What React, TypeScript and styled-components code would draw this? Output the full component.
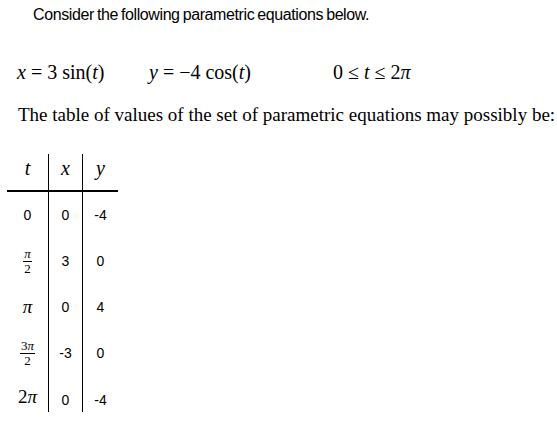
import React from "react";
import styled, { createGlobalStyle } from "styled-components";

const GlobalStyle = createGlobalStyle`
  html, body {
    margin: 0;
    padding: 0;
    background: #ffffff;
    color: #000000;
  }
`;

const Page = styled.div`
  width: 557px;
  height: 428px;
  overflow: hidden;
  display: flex;
  flex-direction: column;
`;

const Prompt = styled.div`
  margin: 6px 0 0 33px;
  font-family: "Liberation Sans", Arial, sans-serif;
  font-size: 16px;
  letter-spacing: -0.4px;
  word-spacing: -1px;
  line-height: 18px;
`;

const EquationRow = styled.div`
  display: flex;
  margin: 36px 0 0 17px;
  font-family: "Liberation Serif", "Times New Roman", serif;
  font-size: 20px;
  line-height: 24px;
  white-space: pre;
`;

const Eq = styled.span<{ $width: number }>`
  width: ${(p) => p.$width}px;
`;

const V = styled.i`
  font-style: italic;
`;

const Op = styled.span`
  padding: 0 5px;
`;

const Sentence = styled.div`
  margin: 20px 0 0 18px;
  font-family: "Liberation Serif", "Times New Roman", serif;
  font-size: 19px;
  line-height: 22px;
  white-space: nowrap;
`;

const Table = styled.div`
  margin: 28px 0 0 7px;
  display: grid;
  grid-template-columns: 42px 34px 35px;
  grid-template-rows: 38px 46px 46px 46px 46px 36px;
  width: 111px;
`;

const Cell = styled.div<{ $line?: boolean; $head?: boolean; $last?: boolean }>`
  display: flex;
  justify-content: center;
  align-items: ${(p) => (p.$last ? "flex-end" : "center")};
  padding-bottom: ${(p) => (p.$last ? "4px" : "0")};
  border-right: ${(p) => (p.$line ? "1px solid #000" : "none")};
  border-bottom: ${(p) => (p.$head ? "2px solid #000" : "none")};
  font-family: "Liberation Sans", Arial, sans-serif;
  font-size: 14px;
`;

const HeadVar = styled.i`
  font-family: "Liberation Serif", "Times New Roman", serif;
  font-size: 20px;
  margin-top: -8px;
`;

const Serif = styled.span`
  font-family: "Liberation Serif", "Times New Roman", serif;
  font-size: 19px;
`;

const Frac = styled.span`
  display: inline-flex;
  flex-direction: column;
  align-items: center;
  font-family: "Liberation Serif", "Times New Roman", serif;
  font-size: 13px;
  line-height: 12px;
`;

const Num = styled.span`
  padding: 0 1px 1px;
  border-bottom: 1px solid #000;
`;

const Den = styled.span`
  padding-top: 1px;
`;

type Row = { t: React.ReactNode; x: string; y: string };

const rows: Row[] = [
  { t: <span>0</span>, x: "0", y: "-4" },
  {
    t: (
      <Frac>
        <Num>
          <i>π</i>
        </Num>
        <Den>2</Den>
      </Frac>
    ),
    x: "3",
    y: "0",
  },
  {
    t: (
      <Serif>
        <i>π</i>
      </Serif>
    ),
    x: "0",
    y: "4",
  },
  {
    t: (
      <Frac>
        <Num>
          3<i>π</i>
        </Num>
        <Den>2</Den>
      </Frac>
    ),
    x: "-3",
    y: "0",
  },
  {
    t: (
      <Serif>
        2<i>π</i>
      </Serif>
    ),
    x: "0",
    y: "-4",
  },
];

export default function App() {
  return (
    <Page>
      <GlobalStyle />
      <Prompt>Consider the following parametric equations below.</Prompt>
      <EquationRow>
        <Eq $width={132}>
          <V>x</V>
          <Op>=</Op>3 sin(<V>t</V>)
        </Eq>
        <Eq $width={184}>
          <V>y</V>
          <Op>=</Op>−4 cos(<V>t</V>)
        </Eq>
        <Eq $width={100}>
          0<Op>≤</Op>
          <V>t</V>
          <Op>≤</Op>2<V>π</V>
        </Eq>
      </EquationRow>
      <Sentence>The table of values of the set of parametric equations may possibly be:</Sentence>
      <Table>
        <Cell $line $head>
          <HeadVar>t</HeadVar>
        </Cell>
        <Cell $line $head>
          <HeadVar>x</HeadVar>
        </Cell>
        <Cell $head>
          <HeadVar>y</HeadVar>
        </Cell>
        {rows.map((r, i) => {
          const last = i === rows.length - 1;
          return (
            <React.Fragment key={i}>
              <Cell $line $last={last}>
                {r.t}
              </Cell>
              <Cell $line $last={last}>
                {r.x}
              </Cell>
              <Cell $last={last}>{r.y}</Cell>
            </React.Fragment>
          );
        })}
      </Table>
    </Page>
  );
}
